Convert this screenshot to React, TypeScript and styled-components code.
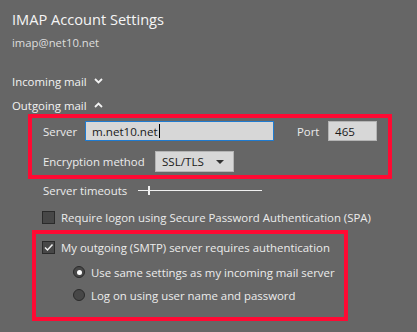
import styled, { createGlobalStyle } from "styled-components";

const GlobalStyle = createGlobalStyle`
  html, body {
    margin: 0;
    padding: 0;
    background: #666666;
  }
  body {
    font-family: "Open Sans", "Noto Sans", sans-serif;
    color: #f2f2f2;
  }
`;

const Page = styled.div`
  width: 417px;
  height: 332px;
  box-sizing: border-box;
  padding: 7px 0 0 12px;
  overflow: hidden;
  white-space: nowrap;
`;

const Title = styled.h1`
  margin: 0;
  font-size: 14.6px;
  font-weight: 400;
  line-height: 24px;
  color: #f5f5f5;
`;

const Email = styled.div`
  font-size: 11.3px;
  line-height: 16px;
  color: #dedede;
  margin-top: 4px;
`;

const Section = styled.div<{ $top: number }>`
  display: flex;
  align-items: center;
  gap: 7px;
  height: 18px;
  margin-top: ${({ $top }) => $top}px;
  font-size: 11.4px;
`;

const Highlight = styled.div<{ $left: number; $width: number }>`
  box-sizing: border-box;
  width: ${({ $width }) => $width}px;
  margin-left: ${({ $left }) => $left}px;
  border: 4px solid #ff0a33;
  display: flex;
  flex-direction: column;
`;

const Row = styled.div`
  display: flex;
  align-items: center;
  min-height: 18px;
  font-size: 11.4px;
  color: #ececec;
`;

const Label = styled.span<{ $width?: number }>`
  width: ${({ $width }) => ($width ? `${$width}px` : "auto")};
  flex-shrink: 0;
`;

const Input = styled.div<{ $width: number; $focused?: boolean }>`
  box-sizing: border-box;
  width: ${({ $width }) => $width}px;
  height: 20px;
  background: #d7d7d7;
  border: 1px solid ${({ $focused }) => ($focused ? "#1f7bd0" : "#b4b4b4")};
  color: #1a1a1a;
  font-size: 11.6px;
  padding-left: 6px;
  display: flex;
  align-items: center;
`;

const Caret = styled.span`
  display: inline-block;
  width: 1px;
  height: 14px;
  background: #000;
  margin-left: 1px;
`;

const Select = styled.div`
  box-sizing: border-box;
  width: 79px;
  height: 21px;
  background: #d7d7d7;
  border: 1px solid #b4b4b4;
  color: #1a1a1a;
  font-size: 11.6px;
  display: flex;
  align-items: center;
  justify-content: space-between;
  padding: 0 9px 0 6px;
`;

const Arrow = styled.span`
  width: 0;
  height: 0;
  border-left: 4px solid transparent;
  border-right: 4px solid transparent;
  border-top: 4px solid #333;
`;

const Slider = styled.div`
  position: relative;
  width: 124px;
  height: 1px;
  background: #f0f0f0;
  margin-left: 14px;
`;

const Thumb = styled.span`
  position: absolute;
  left: 10px;
  top: -4px;
  width: 2px;
  height: 9px;
  background: #f0f0f0;
`;

const Check = styled.span`
  box-sizing: border-box;
  width: 13px;
  height: 13px;
  border: 1px solid #2a2a2a;
  background: #474747;
  display: inline-flex;
  align-items: center;
  justify-content: center;
  margin-right: 6px;
  flex-shrink: 0;
`;

const Radio = styled.span<{ $on?: boolean }>`
  box-sizing: border-box;
  width: 12px;
  height: 12px;
  border-radius: 50%;
  border: 1px solid #2a2a2a;
  background: #474747;
  display: inline-flex;
  align-items: center;
  justify-content: center;
  margin-right: 6px;
  flex-shrink: 0;

  &::after {
    content: "";
    display: ${({ $on }) => ($on ? "block" : "none")};
    width: 5px;
    height: 5px;
    border-radius: 50%;
    background: #fff;
  }
`;

const Chevron = ({ up }: { up?: boolean }) => (
  <svg width="9" height="6" viewBox="0 0 9 6">
    <path
      d={up ? "M1 5 L4.5 1.5 L8 5" : "M1 1 L4.5 4.5 L8 1"}
      fill="none"
      stroke="#f2f2f2"
      strokeWidth="1.8"
    />
  </svg>
);

const Tick = () => (
  <svg width="11" height="11" viewBox="0 0 11 11">
    <path d="M2 5.5 L4.5 8 L9.5 2.5" fill="none" stroke="#f0f0f0" strokeWidth="1.5" />
  </svg>
);

const App = () => (
  <Page>
    <GlobalStyle />
    <Title>IMAP Account Settings</Title>
    <Email>imap@net10.net</Email>

    <Section $top={21}>
      Incoming mail <Chevron />
    </Section>
    <Section $top={6}>
      Outgoing mail <Chevron up />
    </Section>

    <Highlight $left={16} $width={364}>
      <Row style={{ padding: "3px 0 0 11px" }}>
        <Label $width={42}>Server</Label>
        <Input $width={189} $focused>
          m.net10.net
          <Caret />
        </Input>
        <Label style={{ marginLeft: 23 }} $width={31}>
          Port
        </Label>
        <Input $width={49}>465</Input>
      </Row>
      <Row style={{ padding: "10px 0 3px 11px" }}>
        <Label $width={112}>Encryption method</Label>
        <Select>
          SSL/TLS
          <Arrow />
        </Select>
      </Row>
    </Highlight>

    <Row style={{ padding: "2px 0 0 31px" }}>
      <Label $width={81}>Server timeouts</Label>
      <Slider>
        <Thumb />
      </Slider>
    </Row>

    <Row style={{ padding: "9px 0 0 30px" }}>
      <Check />
      Require logon using Secure Password Authentication (SPA)
    </Row>

    <Highlight $left={20} $width={316} style={{ marginTop: 4, paddingBottom: 13 }}>
      <Row style={{ padding: "4px 0 0 6px" }}>
        <Check>
          <Tick />
        </Check>
        My outgoing (SMTP) server requires authentication
      </Row>
      <Row style={{ padding: "7px 0 0 37px" }}>
        <Radio $on />
        Use same settings as my incoming mail server
      </Row>
      <Row style={{ padding: "5px 0 0 37px" }}>
        <Radio />
        Log on using user name and password
      </Row>
    </Highlight>
  </Page>
);

export default App;
